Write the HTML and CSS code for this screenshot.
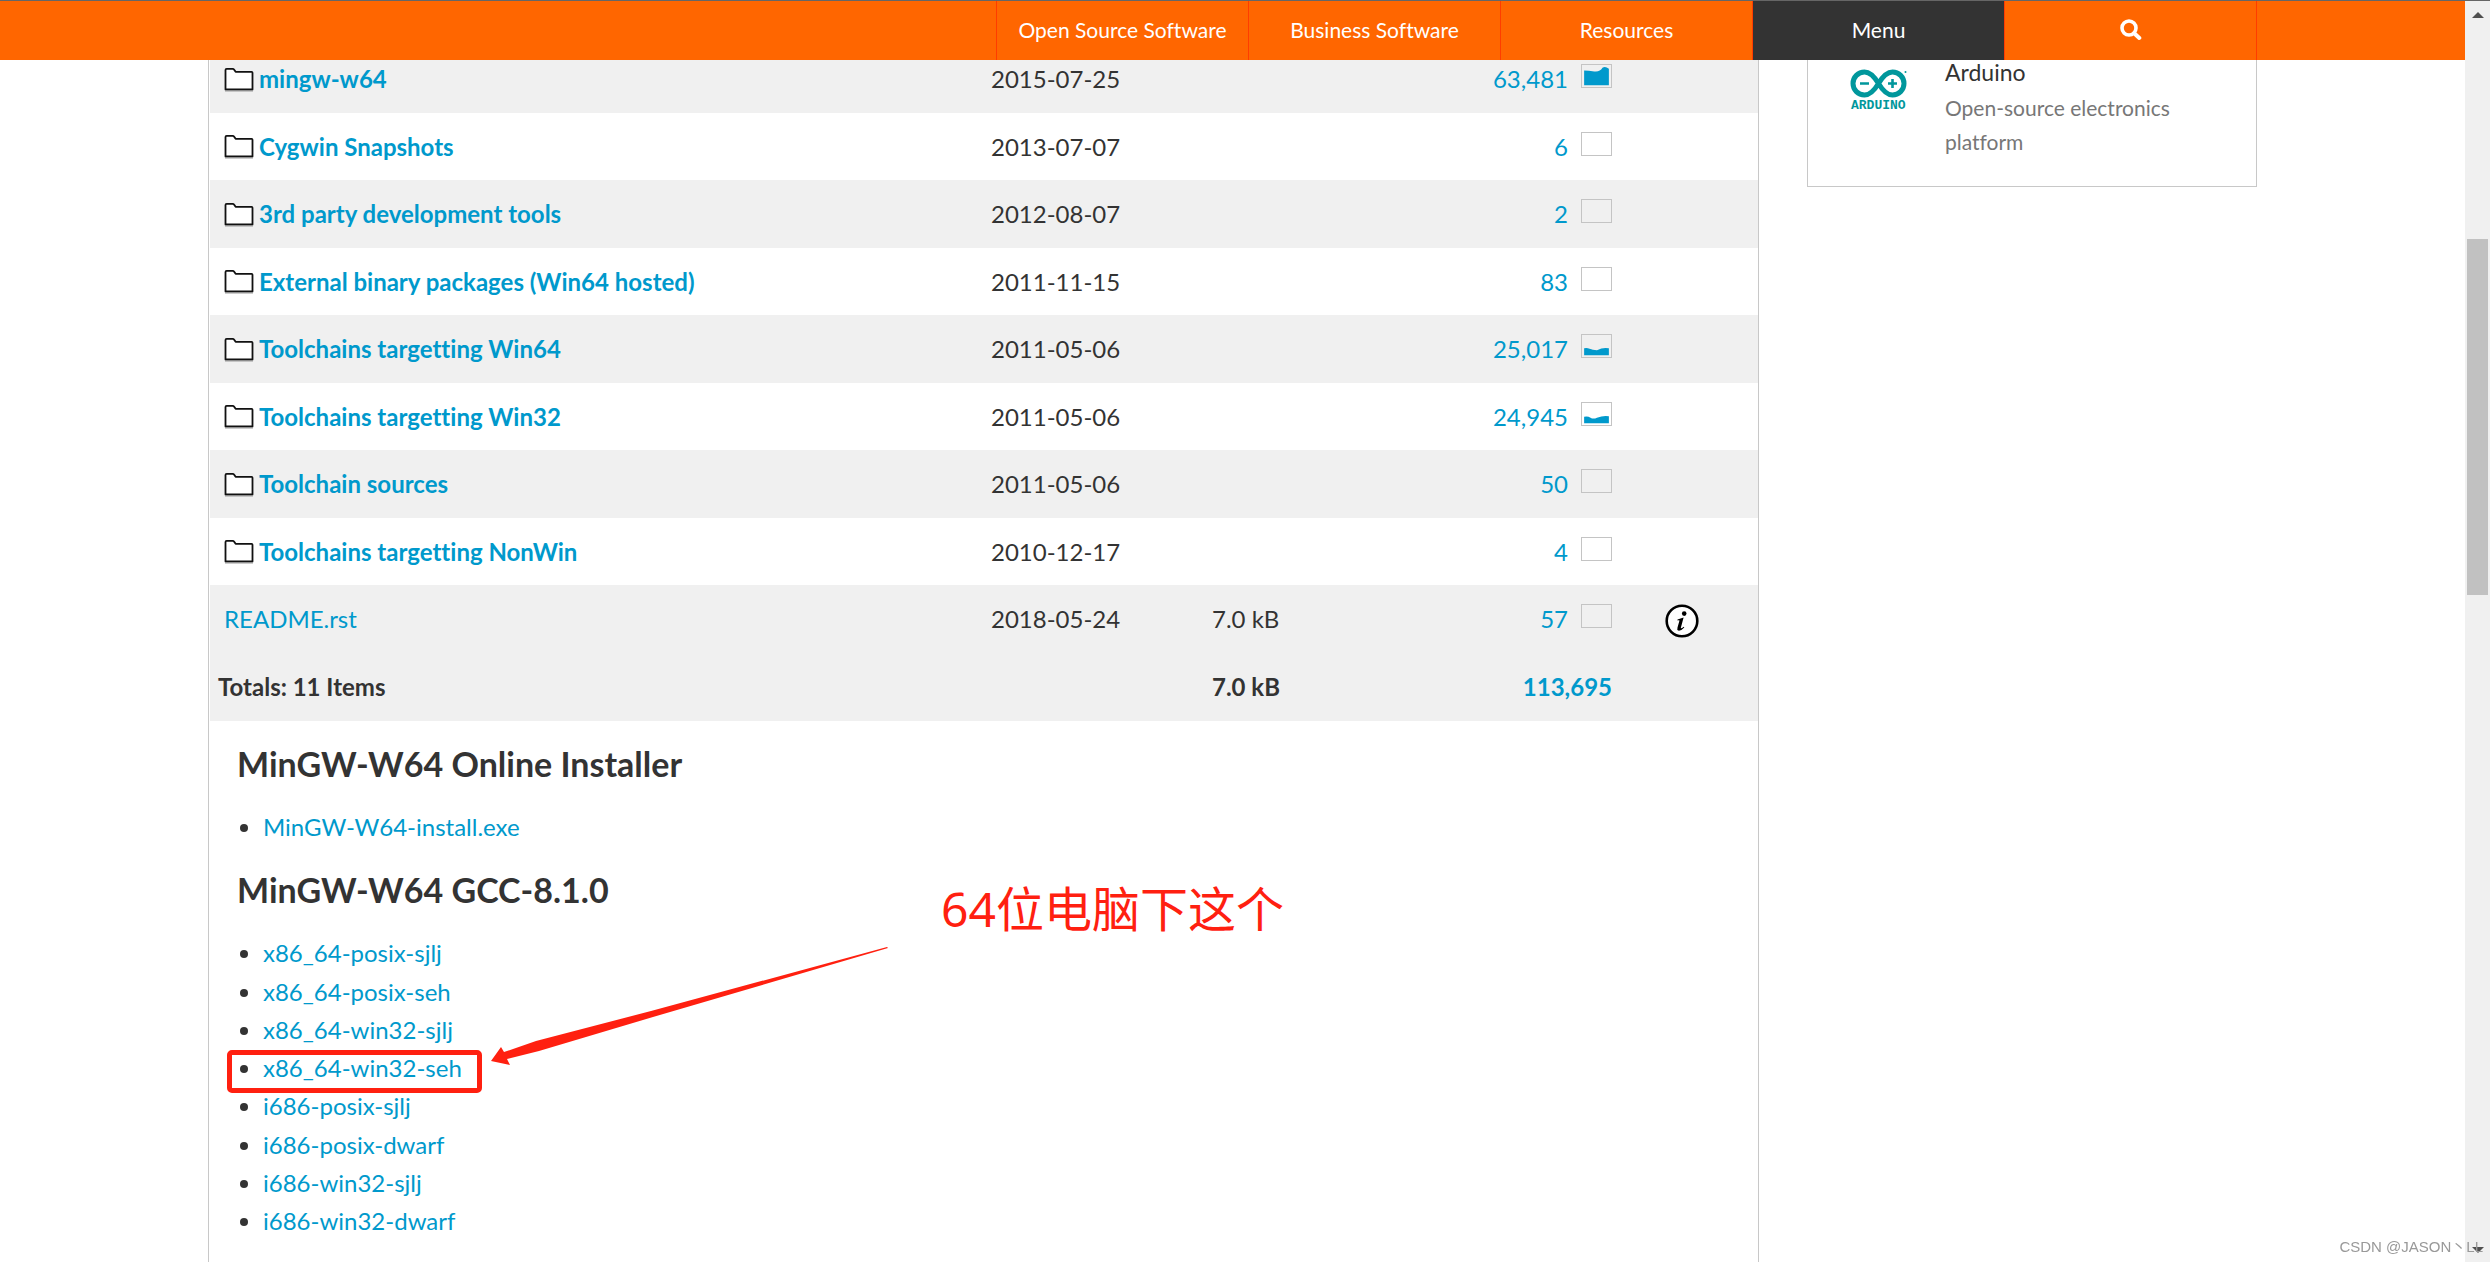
FILE: index.html
```html
<!DOCTYPE html>
<html lang="en">
<head>
<meta charset="utf-8">
<title>MinGW-w64 - Files</title>
<link rel="stylesheet" href="styles.css">
</head>
<body>
<svg class="sprite" aria-hidden="true">
  <symbol id="folder" viewBox="0 0 30 25">
    <path d="M1.5 22.5V3Q1.5 1.8 2.7 1.8H8.6Q9.6 1.8 10.2 2.7L11.6 4.8H27.6Q28.5 4.8 28.5 5.7V22.5Z" fill="#fff" stroke="#111" stroke-width="1.8" stroke-linejoin="round"/>
    <path d="M1 24H29" stroke="#999" stroke-width="1"/>
  </symbol>
</svg>

<header class="topbar">
  <nav class="topnav" aria-label="Main">
    <a href="#">Open Source Software</a>
    <a href="#">Business Software</a>
    <a href="#">Resources</a>
    <button type="button" class="menu">Menu</button>
    <button type="button" class="search" aria-label="Search">
      <svg width="22" height="22" viewBox="0 0 22 22"><circle cx="9" cy="9" r="7" fill="none" stroke="#fff" stroke-width="3.6"/><path d="M14.2 14.2L19.3 19" stroke="#fff" stroke-width="4" stroke-linecap="round"/></svg>
    </button>
  </nav>
</header>

<div class="page">
  <main class="files">
    <table class="file-table">
      <colgroup><col class="c-name"><col class="c-date"><col class="c-size"><col class="c-count"><col class="c-info"></colgroup>
      <tbody>
        <tr><th scope="row"><a href="#"><svg class="folder"><use href="#folder"/></svg>mingw-w64</a></th><td>2015-07-25</td><td></td><td class="count"><a href="#">63,481<svg class="spark" viewBox="0 0 31 24"><path d="M2 6Q7 6 13 7T22 3Q25 1 29 4V22H2Z"/></svg></a></td><td></td></tr>
        <tr><th scope="row"><a href="#"><svg class="folder"><use href="#folder"/></svg>Cygwin Snapshots</a></th><td>2013-07-07</td><td></td><td class="count"><a href="#">6<svg class="spark"></svg></a></td><td></td></tr>
        <tr><th scope="row"><a href="#"><svg class="folder"><use href="#folder"/></svg>3rd party development tools</a></th><td>2012-08-07</td><td></td><td class="count"><a href="#">2<svg class="spark"></svg></a></td><td></td></tr>
        <tr><th scope="row"><a href="#"><svg class="folder"><use href="#folder"/></svg>External binary packages (Win64 hosted)</a></th><td>2011-11-15</td><td></td><td class="count"><a href="#">83<svg class="spark"></svg></a></td><td></td></tr>
        <tr><th scope="row"><a href="#"><svg class="folder"><use href="#folder"/></svg>Toolchains targetting Win64</a></th><td>2011-05-06</td><td></td><td class="count"><a href="#">25,017<svg class="spark" viewBox="0 0 31 24"><path d="M2 14.500Q5 13.500 8 15T16 16.500Q23 13 29 14.500V22H2Z"/></svg></a></td><td></td></tr>
        <tr><th scope="row"><a href="#"><svg class="folder"><use href="#folder"/></svg>Toolchains targetting Win32</a></th><td>2011-05-06</td><td></td><td class="count"><a href="#">24,945<svg class="spark" viewBox="0 0 31 24"><path d="M2 15Q6 14 9 16T16 16Q23 13.500 29 14.500V22H2Z"/></svg></a></td><td></td></tr>
        <tr><th scope="row"><a href="#"><svg class="folder"><use href="#folder"/></svg>Toolchain sources</a></th><td>2011-05-06</td><td></td><td class="count"><a href="#">50<svg class="spark"></svg></a></td><td></td></tr>
        <tr><th scope="row"><a href="#"><svg class="folder"><use href="#folder"/></svg>Toolchains targetting NonWin</a></th><td>2010-12-17</td><td></td><td class="count"><a href="#">4<svg class="spark"></svg></a></td><td></td></tr>
        <tr><th scope="row" class="plain"><a href="#">README.rst</a></th><td>2018-05-24</td><td>7.0 kB</td><td class="count"><a href="#">57<svg class="spark"></svg></a></td><td class="info"><button type="button" aria-label="File details"><svg width="34" height="34" viewBox="0 0 34 34"><circle cx="17" cy="17" r="15.300" fill="#fff" stroke="#000" stroke-width="2.600"/><circle cx="19.200" cy="9.600" r="2.300"/><path d="M12.500 15.600Q15.500 14.400 18.600 13.600L15.800 24Q15.700 25 18.800 22.800L19.300 23.400Q16 27 13.400 26.600Q11.700 26.200 12.500 23.400L14.500 16.600Q14.400 16 12.500 16.400Z"/></svg></button></td></tr>
      </tbody>
      <tfoot>
        <tr><th scope="row">Totals: 11 Items</th><td></td><td>7.0 kB</td><td class="count"><a href="#">113,695</a></td><td></td></tr>
      </tfoot>
    </table>

    <section class="readme">
      <h2>MinGW-W64 Online Installer</h2>
      <ul>
        <li><a href="#">MinGW-W64-install.exe</a></li>
      </ul>
      <h2>MinGW-W64 GCC-8.1.0</h2>
      <ul>
        <li><a href="#">x86_64-posix-sjlj</a></li>
        <li><a href="#">x86_64-posix-seh</a></li>
        <li><a href="#">x86_64-win32-sjlj</a></li>
        <li class="marked"><a href="#">x86_64-win32-seh</a>
          <div class="callout">
            <svg width="400" height="124" viewBox="0 0 400 124"><path d="M396 1L160 65L45 95L13 106L10 101L0 115L19 119L16 113L48 105L162 71L397 2Z" fill="#ff2010"/></svg>
            <span lang="zh">64位电脑下这个</span>
          </div>
        </li>
        <li><a href="#">i686-posix-sjlj</a></li>
        <li><a href="#">i686-posix-dwarf</a></li>
        <li><a href="#">i686-win32-sjlj</a></li>
        <li><a href="#">i686-win32-dwarf</a></li>
      </ul>
    </section>
  </main>

  <aside class="card">
    <svg class="logo" width="58" height="46" viewBox="0 0 58 46">
      <g fill="none" stroke="#00979c" stroke-width="5"><path d="M28.500 14.500C24 7 20 3 14.500 3A11.500 11.500 0 0 0 14.500 26C20 26 24 22 28.500 14.500C33 7 37 3 42.500 3A11.500 11.500 0 0 1 42.500 26C37 26 33 22 28.500 14.500Z"/><path d="M10 14.500H19M38 14.500H47M42.500 10V19" stroke-width="2.600"/></g>
      <circle cx="55.500" cy="3" r="1" fill="#00979c"/>
      <text x="1" y="40" class="logo-text">ARDUINO</text>
    </svg>
    <div class="card-text">
      <h3>Arduino</h3>
      <p>Open-source electronics platform</p>
    </div>
  </aside>
</div>

<div class="scrollbar" aria-hidden="true">
  <svg width="12" height="6" viewBox="0 0 12 6"><path d="M0 6L6 0L12 6Z"/></svg>
  <div class="track"><div class="thumb"></div></div>
  <svg width="12" height="6" viewBox="0 0 12 6"><path d="M0 0H12L6 6Z"/></svg>
</div>
<div class="watermark">CSDN @JASON丶LL</div>
</body>
</html>
```
FILE: styles.css
```css
*, *::before { box-sizing: border-box; }

html { height: 100%; }

body {
  margin: 0;
  height: 100%;
  padding-right: 25px;
  overflow: hidden;
  background: #fff;
  color: #333;
  font: 24px/38px Lato, "Noto Sans CJK SC", sans-serif;
  font-variant-ligatures: none;
}

a { color: #09c; text-decoration: none; }

button { padding: 0; border: 0; background: none; font: inherit; color: inherit; }

.sprite { display: none; }

/* Top bar */
.topbar {
  position: fixed;
  z-index: 2;
  top: 0;
  left: 0;
  right: 0;
  height: 60px;
  padding-right: 25px;
  border-top: 1px solid #666;
  background: #f60;
}

.topnav {
  display: grid;
  grid-template-columns: repeat(5, 252px);
  justify-content: end;
  height: 100%;
  width: 2049px;
  max-width: 100%;
  margin: 0 auto;
  border-right: 1px solid #ff3c00;
  font-size: 21px;
}

.topnav > * {
  display: flex;
  align-items: center;
  justify-content: center;
  padding-bottom: 2px;
  border-left: 1px solid #ff3c00;
  color: #fff;
}

.topnav .menu { background: #333; }

/* Page columns */
.page {
  display: flex;
  align-items: flex-start;
  gap: 48px;
  width: 2049px;
  max-width: 100%;
  min-height: 100%;
  margin: 0 auto;
  padding-top: 45px;
}

.files {
  flex: 1;
  align-self: stretch;
  padding-left: 1px;
  border: solid #c8c8c8;
  border-width: 0 1px;
  min-height: calc(100vh - 45px);
}

/* File list */
.file-table {
  width: 100%;
  table-layout: fixed;
  border-collapse: collapse;
}

.c-name { width: 773px; }
.c-date { width: 221px; }
.c-size { width: 221px; }
.c-count { width: 187px; }

.file-table tr { height: 67px; }
.file-table tr:nth-child(odd) { height: 68px; background: #f0f0f0; }
.file-table th, .file-table td { padding: 0 0 0 8px; text-align: left; }
.file-table tbody th { padding-left: 14px; }
.file-table th a { display: flex; align-items: center; gap: 5px; }
.file-table .plain { font-weight: 400; }
.file-table .count { padding: 0; text-align: right; }
.file-table .count a { display: flex; align-items: center; justify-content: flex-end; gap: 13px; }
.file-table tfoot { font-weight: 700; }

.folder { width: 30px; height: 25px; }

.spark {
  width: 31px;
  height: 24px;
  margin-bottom: 6px;
  border: 1px solid #c4c4c4;
  fill: #09c;
}

.file-table .info { padding: 4px 0 0 53px; }
.info button { display: block; }
.info svg { display: block; }

/* Readme */
.readme { padding: 23px 27px; }

.readme h2 {
  margin: 0 0 24px;
  font-size: 34px;
  font-weight: 700;
  line-height: 40px;
}

.readme ul { margin: 0 0 24px; padding-left: 26px; }
.readme li:nth-child(4n + 2) { line-height: 39px; }

.marked { position: relative; }

.marked::before {
  content: "";
  position: absolute;
  left: -36px;
  top: 1px;
  width: 255px;
  height: 43px;
  border: 5px solid #ff2010;
  border-radius: 5px;
}

.callout {
  position: absolute;
  left: 228px;
  top: -103px;
  display: flex;
  gap: 50px;
  color: #ff2010;
}

.callout span {
  margin-top: -67px;
  font: 48px/60px "Noto Sans", "Noto Sans CJK SC", sans-serif;
  white-space: nowrap;
}

/* Side card */
.card {
  display: flex;
  gap: 37px;
  width: 450px;
  height: 142px;
  padding: 8px 40px 0 42px;
  border: 1px solid #c8c8c8;
}

.logo { flex: none; margin-top: 15px; }

.logo-text {
  font: 700 13px "Liberation Mono", monospace;
  fill: #00979c;
}

.card h3 {
  margin: 0 0 1px;
  font-size: 23px;
  font-weight: 400;
  line-height: 36px;
}

.card p {
  margin: 0;
  color: #777;
  font-size: 21px;
  line-height: 34px;
}

/* Scrollbar */
.scrollbar {
  position: fixed;
  z-index: 3;
  top: 0;
  right: 0;
  bottom: 0;
  display: flex;
  flex-direction: column;
  align-items: center;
  width: 25px;
  padding: 11px 0 9px;
  border-top: 1px solid #666;
  background: #f0f0f0;
  fill: #505050;
}

.track { flex: 1; width: 21px; padding-top: 221px; }
.thumb { height: 356px; background: #c1c1c1; }

.watermark {
  position: fixed;
  z-index: 4;
  right: 7px;
  bottom: 3px;
  color: #999;
  font: 15px/24px "Liberation Sans", "Noto Sans CJK SC", sans-serif;
}
```
